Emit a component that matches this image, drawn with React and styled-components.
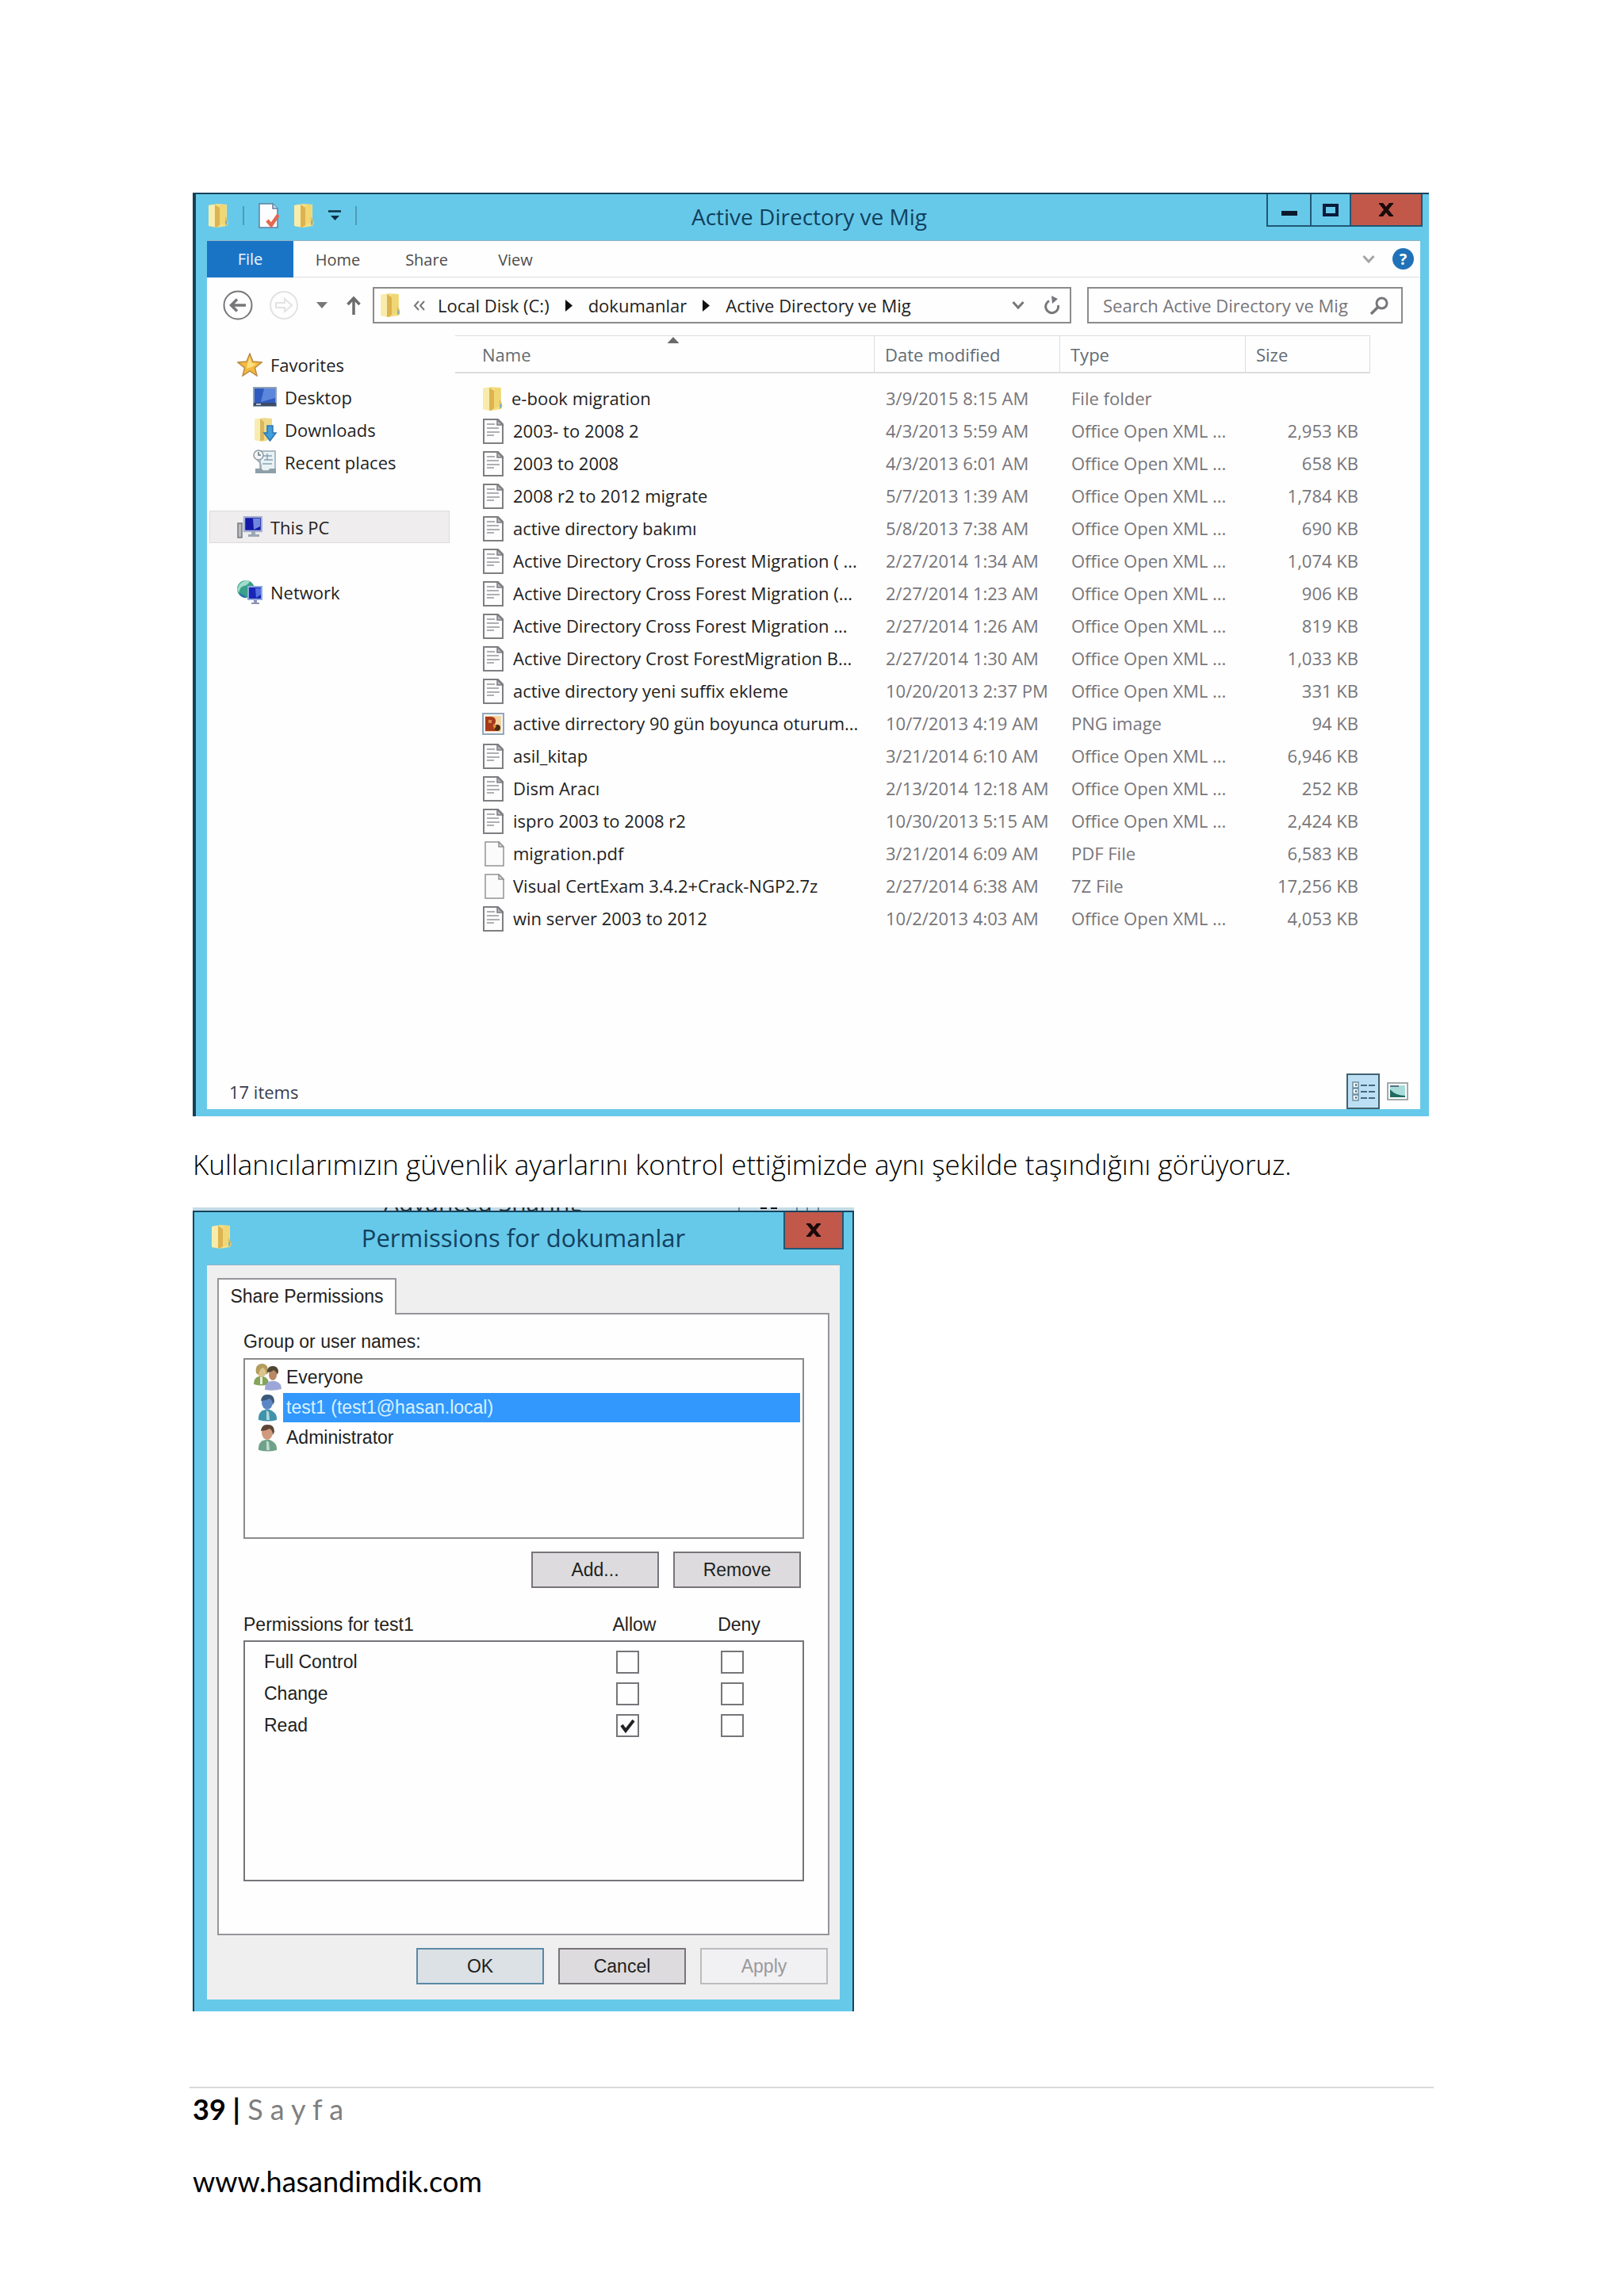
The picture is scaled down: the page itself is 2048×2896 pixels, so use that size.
import { Fragment } from 'react';
import styled, { createGlobalStyle } from 'styled-components';

const GlobalStyle = createGlobalStyle`
  *, *::before, *::after {
    box-sizing: border-box;
  }

  body {
    margin: 0;
    background: #fff;
    color: #1f1f1f;
    font-family: "Open Sans", "Noto Sans", sans-serif;
    font-size: 22px;
    line-height: 30px;
  }

  button, input {
    margin: 0;
    padding: 0;
    border: 0;
    background: none;
    color: inherit;
    font: inherit;
  }

  a {
    color: inherit;
    text-decoration: none;
  }

  svg {
    display: block;
    flex: none;
  }
`;

const Page = styled.main`
  padding: 243px 246px 100px 243px;
`;

/* window chrome */

const ExplorerWindow = styled.section`
  border-top: 2px solid #17435d;
  border-left: 4px solid #173f55;
  background: #67c9e9;
`;

const TitleBar = styled.header`
  display: grid;
  grid-template-columns: 1fr auto 1fr;
  height: ${({ $height }) => $height};
  padding: ${({ $padding }) => $padding};
`;

const TitleTools = styled.div`
  display: flex;
  align-items: center;
  gap: 18px;
  padding: 0 0 4px ${({ $indent }) => $indent};
`;

const TitleText = styled.h1`
  margin: 0;
  padding-top: 8px;
  color: #12415f;
  font-size: ${({ $size }) => $size};
  font-weight: 400;
  line-height: 40px;
`;

const Divider = styled.span`
  width: 2px;
  height: 24px;
  background: #4a9dbb;
`;

const WindowControls = styled.div`
  display: flex;
  justify-content: flex-end;
  align-items: flex-start;
`;

const ControlButton = styled.button`
  display: flex;
  justify-content: center;
  align-items: center;
  width: ${({ $width }) => $width};
  height: ${({ $height }) => $height || '41px'};
  border: 2px solid #1f5876;
  border-top: 0;
  background: ${({ $danger }) => ($danger ? '#c1584a' : 'transparent')};

  & + & {
    border-left: 0;
  }
`;

/* explorer */

const ExplorerBody = styled.div`
  margin: 0 11px 0 14px;
  border-top: 1px solid #8fb3c4;
  background: #fefefe;
`;

const Ribbon = styled.nav`
  display: flex;
  align-items: center;
  height: 46px;
  border-bottom: 1px solid #dedede;
  color: #4d4d4d;
  font-size: 20px;
`;

const FileTab = styled.button`
  width: 109px;
  height: 46px;
  background: #1a74c6;
  color: #e9f6ff;
`;

const RibbonTab = styled.button`
  width: 112px;
  height: 46px;
  padding-top: 3px;
`;

const RibbonEnd = styled.div`
  display: flex;
  align-items: center;
  gap: 22px;
  margin-left: auto;
  padding-right: 8px;
`;

const HelpButton = styled.button`
  width: 27px;
  height: 27px;
  border-radius: 50%;
  background: #2072b8;
  color: #fff;
  font-size: 20px;
  font-weight: 700;
  line-height: 27px;
`;

const AddressRow = styled.div`
  display: flex;
  align-items: center;
  gap: 13px;
  padding: 12px 22px 15px 20px;
`;

const NavButtons = styled.div`
  display: flex;
  align-items: center;
  gap: 20px;
`;

const NavButton = styled.button`
  display: flex;
  justify-content: center;
  width: ${({ $width }) => $width};
`;

const AddressBox = styled.div`
  display: flex;
  flex: 1;
  align-items: center;
  gap: 16px;
  height: 46px;
  padding: 0 11px 0 7px;
  border: 2px solid #8d8a8c;
`;

const Crumbs = styled.nav`
  display: flex;
  flex: 1;
  align-items: center;
  gap: 20px;
`;

const SearchBox = styled.label`
  display: flex;
  align-items: center;
  width: 398px;
  height: 46px;
  margin-left: 7px;
  padding: 0 16px 0 18px;
  border: 2px solid #8d8a8c;
`;

const SearchInput = styled.input`
  flex: 1;
  min-width: 0;
  outline: 0;

  &::placeholder {
    color: #77757a;
    opacity: 1;
  }
`;

const Panes = styled.div`
  display: grid;
  grid-template-columns: 313px minmax(0, 1fr);
  padding-right: 63px;
  padding-bottom: 175px;
`;

const Sidebar = styled.nav`
  display: flex;
  flex-direction: column;
  padding: 16px 7px 0 3px;
`;

const SideLink = styled.a`
  display: flex;
  align-items: center;
  gap: 10px;
  height: 41px;
  margin-top: ${({ $spaced }) => ($spaced ? '41px' : '0')};
  padding-left: ${({ $nested }) => ($nested ? '54px' : '34px')};
  border: 1px solid ${({ $active }) => ($active ? '#dcdadb' : 'transparent')};
  background: ${({ $active }) => ($active ? '#efedee' : 'transparent')};
`;

const FileTable = styled.table`
  display: block;
`;

const FileHead = styled.thead`
  display: block;
  margin-bottom: 11px;
  border: 1px solid #dddcde;
  border-width: 1px 1px 2px 0;
`;

const FileBody = styled.tbody`
  display: block;
`;

const FileRow = styled.tr`
  display: grid;
  grid-template-columns: minmax(0, 1fr) 234px 234px 157px;
`;

const HeadCell = styled.th`
  position: relative;
  height: 45px;
  padding: 2px 0 0 ${({ $first }) => ($first ? '33px' : '13px')};
  border-left: 1px solid ${({ $first }) => ($first ? 'transparent' : '#dddcde')};
  color: #636b74;
  font-weight: 400;
  line-height: 42px;
  text-align: left;
`;

const SortMark = styled.svg`
  position: absolute;
  top: 1px;
  left: 52%;
  transform: translateX(-50%);
`;

const Cell = styled.td`
  height: 41px;
  padding: 0 0 0 14px;
  color: #77757a;
  line-height: 41px;
  white-space: nowrap;
`;

const NameCell = styled(Cell)`
  display: flex;
  align-items: center;
  gap: 11px;
  padding-left: 34px;
  color: #1f1f1f;
`;

const SizeCell = styled(Cell)`
  padding-right: 15px;
  text-align: right;
`;

const StatusBar = styled.footer`
  display: flex;
  align-items: center;
  gap: 8px;
  height: 45px;
  padding: 0 15px 0 28px;
  color: #3a3c50;
`;

const StatusText = styled.span`
  flex: 1;
`;

const ViewButton = styled.button`
  display: flex;
  justify-content: center;
  align-items: center;
  width: ${({ $active }) => ($active ? '42px' : '28px')};
  height: 45px;
  border: ${({ $active }) => ($active ? '2px solid #41626f' : '0')};
  background: ${({ $active }) => ($active ? '#bcdff3' : 'transparent')};
`;

const WindowEdge = styled.div`
  height: ${({ $height }) => $height};
`;

const Paragraph = styled.p`
  margin: 0;
  padding: 37px 0 30px;
  color: #000;
  font-size: 35px;
  font-weight: 300;
  line-height: 48px;
`;

/* permissions dialog */

const DialogShot = styled.div`
  max-width: 834px;
`;

const BehindStrip = styled.div`
  display: flex;
  justify-content: space-between;
  align-items: flex-end;
  height: 4px;
  padding: 0 44px 0 241px;
  overflow: hidden;
  background: #c3dbe6;
  color: #1c2b33;
  font-size: 30px;
  line-height: 20px;
`;

const DialogWindow = styled.section`
  border: 2px solid #17435d;
  border-bottom: 0;
  background: #67c9e9;
  font-family: "Liberation Sans", Arial, sans-serif;
  font-size: 23px;
`;

const DialogTitleText = styled(TitleText)`
  padding-top: 12px;
  font-family: "Open Sans", "Noto Sans", sans-serif;
`;

const DialogBody = styled.div`
  margin: 0 16px;
  padding: 16px 13px 19px;
  border-top: 1px solid #8fb3c4;
  background: #f0eff0;
`;

const TabButton = styled.button`
  position: relative;
  display: block;
  width: 226px;
  height: 46px;
  margin-bottom: -2px;
  padding-bottom: 3px;
  border: 2px solid #97959a;
  border-bottom: 0;
  background: #fefefe;
`;

const TabPanel = styled.div`
  padding: 19px 30px 66px 31px;
  border: 2px solid #97959a;
  background: #fefefe;
`;

const GroupLabel = styled.h2`
  margin: 0 0 6px;
  font-size: 23px;
  font-weight: 400;
  line-height: 30px;
`;

const UserList = styled.ul`
  min-height: 228px;
  margin: 0;
  padding: 3px 3px 0 8px;
  border: 2px solid #8d8a8c;
  list-style: none;
`;

const UserItem = styled.li`
  display: grid;
  grid-template-columns: 40px 1fr;
  align-items: center;
  height: 38px;

  > svg {
    justify-self: center;
  }
`;

const UserName = styled.button`
  height: 37px;
  padding-left: 4px;
  background: ${({ $selected }) => ($selected ? '#3298fe' : 'transparent')};
  color: ${({ $selected }) => ($selected ? '#d9f2ff' : 'inherit')};
  text-align: left;
`;

const ButtonRow = styled.div`
  display: flex;
  justify-content: flex-end;
  gap: 18px;
  padding: ${({ $padding }) => $padding};
`;

const tones = {
  normal: { border: '#77757a', fill: '#dddbdd', text: '#1f1f1f' },
  primary: { border: '#5a89a5', fill: '#dbe1e5', text: '#1f1f1f' },
  disabled: { border: '#bdbbbe', fill: '#f1f0f2', text: '#9a999c' },
};

const PushButton = styled.button`
  width: 161px;
  height: 46px;
  border: 2px solid ${({ $tone }) => tones[$tone].border};
  background: ${({ $tone }) => tones[$tone].fill};
  color: ${({ $tone }) => tones[$tone].text};
`;

const PermissionTable = styled.table`
  display: block;
`;

const PermissionHead = styled.thead`
  display: block;
  margin-bottom: 5px;
`;

const PermissionBody = styled.tbody`
  display: block;
  min-height: 304px;
  padding-top: 5px;
  border: 2px solid #77757a;
`;

const PermissionRow = styled.tr`
  display: grid;
  grid-template-columns: minmax(0, 1fr) 132px 132px;
  padding-right: 16px;
`;

const PermissionCell = styled.td`
  display: flex;
  justify-content: center;
  align-items: center;
  height: 40px;
  padding: 0 14px 0 0;
`;

const PermissionName = styled.th`
  height: ${({ $head }) => ($head ? '30px' : '40px')};
  padding: 0 0 0 ${({ $inset }) => ($inset ? '24px' : '0')};
  font-weight: 400;
  line-height: ${({ $head }) => ($head ? '30px' : '40px')};
  text-align: ${({ $center }) => ($center ? 'center' : 'left')};
`;

const Checkbox = styled.input`
  appearance: none;
  width: 29px;
  height: 29px;
  border: 2px solid #77757a;
  background: #fefefe;

  &:checked {
    background: #fefefe url("data:image/svg+xml,%3Csvg xmlns='http://www.w3.org/2000/svg' viewBox='0 0 25 25'%3E%3Cpath d='M5 12l5 7L20 6' fill='none' stroke='%23222' stroke-width='4'/%3E%3C/svg%3E") center / contain no-repeat;
  }
`;

/* page footer */

const PageFooter = styled.footer`
  margin: 95px -6px 0 -4px;
  padding: 4px 4px 0;
  border-top: 2px solid #d9d9d9;
  color: #000;
  font-family: Lato, "Open Sans", sans-serif;
  font-size: 36px;
  line-height: 44px;
`;

const PageNumber = styled.p`
  margin: 0 0 47px;
`;

const PageWord = styled.span`
  color: #7f7f7f;
`;

/* icons */

const FolderIcon = () => (
  <svg width="26" height="32" viewBox="0 0 26 32" aria-hidden="true">
    <path d="M1 3l11-2 12 1v20l2 3-2 4-13 2-10-2z" fill="#f3df86" />
    <path d="M1 3l8-1v28l-8-1z" fill="#f8ecab" />
    <path d="M9 2l6 4v22l-4 3-2-1z" fill="#dcb350" />
    <path d="M15 3l8-1v23l-8 3z" fill="#f0d674" />
    <path d="M22 17l3 5v5l-3 2z" fill="#d3bd62" />
    <path d="M23 23v4" stroke="#7fb3c4" strokeWidth="2" />
  </svg>
);

const CheckedPageIcon = () => (
  <svg width="26" height="32" viewBox="0 0 26 32" aria-hidden="true">
    <path d="M1 1h17l6 6v24H1z" fill="#fdfdff" stroke="#5f7fa0" strokeWidth="1.5" />
    <path d="M18 1v6h6" fill="#cfdcec" stroke="#5f7fa0" strokeWidth="1.5" />
    <path d="M11 22l5 6 9-13" fill="none" stroke="#e2694f" strokeWidth="4.5" />
  </svg>
);

const CustomizeIcon = () => (
  <svg width="16" height="14" viewBox="0 0 16 14" aria-hidden="true">
    <path d="M0 1.5h16" stroke="#0d2f45" strokeWidth="2.5" />
    <path d="M3 7h11l-5.5 6z" fill="#0d2f45" />
  </svg>
);

const MinimizeIcon = () => (
  <svg width="20" height="14" viewBox="0 0 20 14" aria-hidden="true">
    <path d="M0 11h20" stroke="#0a1a2c" strokeWidth="6" />
  </svg>
);

const MaximizeIcon = () => (
  <svg width="20" height="16" viewBox="0 0 20 16" aria-hidden="true">
    <path d="M2 2h16v12H2z" fill="none" stroke="#0a1a3a" strokeWidth="4" />
  </svg>
);

const CloseIcon = () => (
  <svg width="20" height="17" viewBox="0 0 20 17" aria-hidden="true">
    <path d="M1 1h5M14 1h5M1 16h5M14 16h5" stroke="#1a0a0c" strokeWidth="2" />
    <path d="M4 1l12 15M16 1L4 16" stroke="#1a0a0c" strokeWidth="4.5" />
  </svg>
);

const BehindControls = () => (
  <svg width="102" height="4" viewBox="0 0 102 4" aria-hidden="true">
    <path d="M1 0v4M74 0v4M87 0v4M101 0v4" stroke="#4c6570" strokeWidth="1.500" />
    <path d="M28 1h8M41 1h8" stroke="#111" strokeWidth="2" />
  </svg>
);

const ChevronIcon = ({ color = '#8b8b8b', width = 3 }) => (
  <svg width="16" height="12" viewBox="0 0 16 12" aria-hidden="true">
    <path d="M1.5 2L8 9l6.5-7" fill="none" stroke={color} strokeWidth={width} />
  </svg>
);

const BackIcon = () => (
  <svg width="38" height="38" viewBox="0 0 38 38" aria-hidden="true">
    <circle cx="19" cy="19" r="17.5" fill="none" stroke="#78767a" strokeWidth="2" />
    <path d="M29 19H11M18 11.5L10.500 19l7.500 7.500" fill="none" stroke="#78767a" strokeWidth="3.500" />
  </svg>
);

const ForwardIcon = () => (
  <svg width="38" height="38" viewBox="0 0 38 38" aria-hidden="true">
    <circle cx="19" cy="19" r="17" fill="none" stroke="#e4e2e4" strokeWidth="2" />
    <path d="M9 16h11v-5l9 8-9 8v-5H9z" fill="none" stroke="#e4e2e4" strokeWidth="2" />
  </svg>
);

const RecentIcon = () => (
  <svg width="14" height="9" viewBox="0 0 14 9" aria-hidden="true">
    <path d="M0 0h14L7 8z" fill="#78767a" />
  </svg>
);

const UpIcon = () => (
  <svg width="18" height="24" viewBox="0 0 18 24" aria-hidden="true">
    <path d="M9 24V3M1.500 11L9 3l7.500 8" fill="none" stroke="#6d6b6e" strokeWidth="3.500" />
  </svg>
);

const CrumbArrow = () => (
  <svg width="9" height="15" viewBox="0 0 9 15" aria-hidden="true">
    <path d="M0 0l9 7.500L0 15z" fill="#111" />
  </svg>
);

const CollapsedIcon = () => (
  <svg width="15" height="13" viewBox="0 0 15 13" aria-hidden="true">
    <path d="M7 1L2 6.500 7 12M14 1L9 6.500l5 5.500" fill="none" stroke="#777" strokeWidth="2" />
  </svg>
);

const RefreshIcon = () => (
  <svg width="22" height="24" viewBox="0 0 22 24" aria-hidden="true">
    <path d="M7 6.500A8 8 0 1 0 18.500 12" fill="none" stroke="#78767a" strokeWidth="3" />
    <path d="M10 0l8 4-7 6z" fill="#78767a" />
  </svg>
);

const SearchIcon = () => (
  <svg width="23" height="23" viewBox="0 0 23 23" aria-hidden="true">
    <circle cx="14.500" cy="8.500" r="6.500" fill="none" stroke="#78767a" strokeWidth="3" />
    <path d="M10 13l-9 9" stroke="#78767a" strokeWidth="3.500" />
  </svg>
);

const StarIcon = () => (
  <svg width="32" height="30" viewBox="0 0 32 30" aria-hidden="true">
    <path d="M16 1l4 10 11 1-8.500 7L25 29l-9-6-9 6 2.500-10L1 12l11-1z" fill="#f6b93c" stroke="#b98a48" strokeWidth="1.500" />
    <path d="M16 5l2.500 8 6 1-6.500 4-6 2 1-6z" fill="#fde07f" />
  </svg>
);

const DesktopIcon = () => (
  <svg width="30" height="25" viewBox="0 0 30 25" aria-hidden="true">
    <path d="M1 1h28v23H1z" fill="#2f5bc0" stroke="#8fa0b4" strokeWidth="2" />
    <path d="M14 2h14v12L10 19z" fill="#6f9ae6" opacity=".7" />
    <path d="M1 22h28" stroke="#3c4c66" strokeWidth="4" />
    <path d="M4 22h6" stroke="#b6c6d8" strokeWidth="2" />
  </svg>
);

const DownloadsIcon = () => (
  <svg width="30" height="32" viewBox="0 0 30 32" aria-hidden="true">
    <path d="M2 3l12-2 10 1v26l-12 3-10-2z" fill="#efd98a" />
    <path d="M2 3l7-1v28l-7-1z" fill="#f8ecb2" />
    <path d="M9 2l5 4v23l-5 1z" fill="#d9b75c" />
    <path d="M18 11h7v9h4l-7.500 10L14 20h4z" fill="#3f9fdb" stroke="#2b77b4" strokeWidth="1.500" />
  </svg>
);

const RecentPlacesIcon = () => (
  <svg width="30" height="31" viewBox="0 0 30 31" aria-hidden="true">
    <path d="M9 2h19v25H9z" fill="#eaf1f5" stroke="#93a5b0" strokeWidth="1.500" />
    <path d="M12 8h12M18 5v9M14 13h11M12 18h12" stroke="#86a3b5" strokeWidth="1.500" />
    <path d="M5 13q5 3 5 8v6h14" fill="none" stroke="#9fb0b9" strokeWidth="2" />
    <path d="M3 24h8l2 3h6l2-3h8v6H3z" fill="#8f9fa8" />
    <circle cx="7" cy="7" r="6" fill="#f3f6f8" stroke="#8f9ba3" strokeWidth="1.500" />
    <path d="M7 3v4h3" fill="none" stroke="#67757e" strokeWidth="1.500" />
  </svg>
);

const ComputerIcon = () => (
  <svg width="32" height="28" viewBox="0 0 32 28" aria-hidden="true">
    <path d="M1 9h5v18H1z" fill="#b9bcc0" stroke="#75797e" strokeWidth="1.500" />
    <path d="M9 1h22v18H9z" fill="#1418a8" stroke="#a3b3cf" strokeWidth="2.500" />
    <path d="M20 3h9v10l-8 4z" fill="#7187dd" />
    <path d="M18 19h5v4h5v3H14v-3h4z" fill="#9aa6b4" />
  </svg>
);

const NetworkIcon = () => (
  <svg width="32" height="32" viewBox="0 0 32 32" aria-hidden="true">
    <circle cx="11" cy="12" r="11" fill="#3aa089" />
    <path d="M3 6q7-7 13-4-2 5-7 6t-6 6-3-2z" fill="#9fdccb" />
    <path d="M2 17q6 1 10 6-6 1-10-6z" fill="#2f6fb0" />
    <path d="M14 9h17v16H14z" fill="#1726b8" stroke="#91a9dd" strokeWidth="2" />
    <path d="M23 11h7v8l-6 4z" fill="#5470e0" />
    <path d="M21 26h4v3h3v2H18v-2h3z" fill="#8d93b5" />
  </svg>
);

const DocumentIcon = () => (
  <svg width="28" height="32" viewBox="0 0 28 32" aria-hidden="true">
    <path d="M2 1h18l6 6v24H2z" fill="#fdfdfd" stroke="#807e82" strokeWidth="2" />
    <path d="M19 1v7h7z" fill="#b9b7ba" stroke="#807e82" strokeWidth="1.500" />
    <path d="M6 7h10M6 12h15M6 17h16M6 21h9" stroke="#97959a" strokeWidth="1.500" />
  </svg>
);

const BlankIcon = () => (
  <svg width="28" height="32" viewBox="0 0 28 32" aria-hidden="true">
    <path d="M4 1h17l6 6v24H4z" fill="#fbfbfb" stroke="#949296" strokeWidth="1.500" />
    <path d="M21 1v6h6z" fill="#dedcde" stroke="#949296" strokeWidth="1.500" />
  </svg>
);

const PictureIcon = () => (
  <svg width="28" height="28" viewBox="0 0 28 28" aria-hidden="true">
    <path d="M1 1h26v26H1z" fill="#f4f6f8" stroke="#94a8b8" strokeWidth="2" />
    <path d="M4 4h20v20H4z" fill="#f3d3a0" />
    <path d="M4 5h8q6 1 5 7-1 3-3 4l3 7H4z" fill="#a8391b" />
    <path d="M8 9h4v4H8z" fill="#d98a4a" />
    <circle cx="19" cy="19" r="4" fill="#4b2a12" />
    <path d="M14 14l4 3-3 4z" fill="#e0902c" />
  </svg>
);

const DetailsIcon = () => (
  <svg width="30" height="26" viewBox="0 0 30 26" aria-hidden="true">
    <path d="M2 1h7v7H2zM2 9h7v7H2zM2 17h7v7H2z" fill="#f5fafc" stroke="#6d8fa2" strokeWidth="1.500" />
    <path d="M5 4.500h2M5 12.500h2M5 20.500h2" stroke="#2c4a5c" strokeWidth="2" />
    <path d="M12 5h8M22 5h8M12 13h8M22 13h8M12 21h8M22 21h8" stroke="#43697f" strokeWidth="2" />
  </svg>
);

const ThumbnailsIcon = () => (
  <svg width="27" height="23" viewBox="0 0 27 23" aria-hidden="true">
    <path d="M1 1h25v21H1z" fill="#fff" stroke="#a3a9ac" strokeWidth="2" />
    <path d="M4 4h19v15H4z" fill="#a8dcd9" />
    <path d="M4 4h11v2H4z" fill="#4f7484" />
    <path d="M4 9q7 8 19 8v2H4z" fill="#1f6b62" />
  </svg>
);

const PersonIcon = ({ skin, shirt, hair }) => (
  <svg width="30" height="35" viewBox="0 0 30 35" aria-hidden="true">
    <path d="M4 33q-1-11 9-13h5q10 4 9 13-11 3-23 0z" fill={shirt} />
    <ellipse cx="15" cy="11" rx="7" ry="9" fill={skin} />
    <path d="M7 9Q8 0 16 1q8 0 8 9l-2 4q0-6-4-8-5 3-11 3z" fill={hair} />
    <path d="M14 21l3 2 1 10h-4z" fill="#e5f3ee" opacity=".7" />
  </svg>
);

const PeopleIcon = () => (
  <svg width="36" height="34" viewBox="0 0 36 34" aria-hidden="true">
    <path d="M1 26q0-9 7-10h5q7 2 7 10-9 3-19 0z" fill="#84a45a" />
    <ellipse cx="11" cy="9" rx="6" ry="8" fill="#dcc48f" />
    <path d="M4 12Q2 1 11 0q9 0 8 12l-3 2q1-6-3-9-5 1-6 9z" fill="#b49c5c" />
    <path d="M15 33q0-10 8-11h5q8 2 8 10-10 3-21 1z" fill="#9ca6d8" />
    <ellipse cx="25" cy="14" rx="5" ry="7" fill="#b98763" />
    <path d="M18 11q0-8 7-8t7 8l-2 3q0-4-4-6-3 3-8 3z" fill="#4d4632" />
    <path d="M9 17h3v9H9z" fill="#eaf2dc" />
  </svg>
);

/* data */

const places = [
  { label: 'Favorites', Icon: StarIcon },
  { label: 'Desktop', Icon: DesktopIcon, nested: true },
  { label: 'Downloads', Icon: DownloadsIcon, nested: true },
  { label: 'Recent places', Icon: RecentPlacesIcon, nested: true },
  { label: 'This PC', Icon: ComputerIcon, spaced: true, active: true },
  { label: 'Network', Icon: NetworkIcon, spaced: true },
];

const xml = 'Office Open XML ...';

const files = [
  [FolderIcon, 'e-book migration', '3/9/2015 8:15 AM', 'File folder', ''],
  [DocumentIcon, '2003- to 2008 2', '4/3/2013 5:59 AM', xml, '2,953 KB'],
  [DocumentIcon, '2003 to 2008', '4/3/2013 6:01 AM', xml, '658 KB'],
  [DocumentIcon, '2008 r2 to 2012 migrate', '5/7/2013 1:39 AM', xml, '1,784 KB'],
  [DocumentIcon, 'active directory bakımı', '5/8/2013 7:38 AM', xml, '690 KB'],
  [DocumentIcon, 'Active Directory Cross Forest Migration ( ...', '2/27/2014 1:34 AM', xml, '1,074 KB'],
  [DocumentIcon, 'Active Directory Cross Forest Migration (...', '2/27/2014 1:23 AM', xml, '906 KB'],
  [DocumentIcon, 'Active Directory Cross Forest Migration ...', '2/27/2014 1:26 AM', xml, '819 KB'],
  [DocumentIcon, 'Active Directory Crost ForestMigration B...', '2/27/2014 1:30 AM', xml, '1,033 KB'],
  [DocumentIcon, 'active directory yeni suffix ekleme', '10/20/2013 2:37 PM', xml, '331 KB'],
  [PictureIcon, 'active dirrectory 90 gün boyunca oturum...', '10/7/2013 4:19 AM', 'PNG image', '94 KB'],
  [DocumentIcon, 'asil_kitap', '3/21/2014 6:10 AM', xml, '6,946 KB'],
  [DocumentIcon, 'Dism Aracı', '2/13/2014 12:18 AM', xml, '252 KB'],
  [DocumentIcon, 'ispro 2003 to 2008 r2', '10/30/2013 5:15 AM', xml, '2,424 KB'],
  [BlankIcon, 'migration.pdf', '3/21/2014 6:09 AM', 'PDF File', '6,583 KB'],
  [BlankIcon, 'Visual CertExam 3.4.2+Crack-NGP2.7z', '2/27/2014 6:38 AM', '7Z File', '17,256 KB'],
  [DocumentIcon, 'win server 2003 to 2012', '10/2/2013 4:03 AM', xml, '4,053 KB'],
];

const crumbs = ['Local Disk (C:)', 'dokumanlar', 'Active Directory ve Mig'];

const users = [
  { name: 'Everyone', icon: <PeopleIcon /> },
  {
    name: 'test1 (test1@hasan.local)',
    icon: <PersonIcon skin="#5b86c4" shirt="#3f93ab" hair="#3c5878" />,
    selected: true,
  },
  { name: 'Administrator', icon: <PersonIcon skin="#d09a7c" shirt="#6fa28a" hair="#5d4636" /> },
];

const permissions = [
  { name: 'Full Control', allow: false, deny: false },
  { name: 'Change', allow: false, deny: false },
  { name: 'Read', allow: true, deny: false },
];

const Explorer = () => (
  <ExplorerWindow>
    <TitleBar $height="58px" $padding="0 8px 0 0">
      <TitleTools $indent="15px">
        <FolderIcon />
        <Divider />
        <CheckedPageIcon />
        <FolderIcon />
        <CustomizeIcon />
        <Divider />
      </TitleTools>
      <TitleText $size="28px">Active Directory ve Mig</TitleText>
      <WindowControls>
        <ControlButton $width="57px" aria-label="Minimize"><MinimizeIcon /></ControlButton>
        <ControlButton $width="50px" aria-label="Maximize"><MaximizeIcon /></ControlButton>
        <ControlButton $width="90px" $danger aria-label="Close"><CloseIcon /></ControlButton>
      </WindowControls>
    </TitleBar>
    <ExplorerBody>
      <Ribbon>
        <FileTab>File</FileTab>
        <RibbonTab>Home</RibbonTab>
        <RibbonTab>Share</RibbonTab>
        <RibbonTab>View</RibbonTab>
        <RibbonEnd>
          <button aria-label="Expand ribbon"><ChevronIcon color="#a5a5a5" /></button>
          <HelpButton>?</HelpButton>
        </RibbonEnd>
      </Ribbon>
      <AddressRow>
        <NavButtons>
          <NavButton $width="38px" aria-label="Back"><BackIcon /></NavButton>
          <NavButton $width="38px" aria-label="Forward"><ForwardIcon /></NavButton>
          <NavButton $width="18px" aria-label="Recent locations"><RecentIcon /></NavButton>
          <NavButton $width="22px" aria-label="Up"><UpIcon /></NavButton>
        </NavButtons>
        <AddressBox>
          <FolderIcon />
          <CollapsedIcon />
          <Crumbs>
            {crumbs.map((crumb, index) => (
              <Fragment key={crumb}>
                {index > 0 && <CrumbArrow />}
                <a href="#files">{crumb}</a>
              </Fragment>
            ))}
          </Crumbs>
          <NavButton $width="32px" aria-label="Previous locations"><ChevronIcon color="#78767a" /></NavButton>
          <NavButton $width="22px" aria-label="Refresh"><RefreshIcon /></NavButton>
        </AddressBox>
        <SearchBox>
          <SearchInput type="text" aria-label="Search" placeholder="Search Active Directory ve Mig" />
          <SearchIcon />
        </SearchBox>
      </AddressRow>
      <Panes>
        <Sidebar>
          {places.map(({ label, Icon, nested, spaced, active }) => (
            <SideLink key={label} href="#files" $nested={nested} $spaced={spaced} $active={active}>
              <Icon />
              {label}
            </SideLink>
          ))}
        </Sidebar>
        <FileTable id="files">
          <FileHead>
            <FileRow>
              <HeadCell $first>
                Name
                <SortMark width="15" height="8" viewBox="0 0 15 8"><path d="M0 8l7.500-8L15 8z" fill="#6b696c" /></SortMark>
              </HeadCell>
              <HeadCell>Date modified</HeadCell>
              <HeadCell>Type</HeadCell>
              <HeadCell>Size</HeadCell>
            </FileRow>
          </FileHead>
          <FileBody>
            {files.map(([Icon, name, date, type, size]) => (
              <FileRow key={name}>
                <NameCell><Icon />{name}</NameCell>
                <Cell>{date}</Cell>
                <Cell>{type}</Cell>
                <SizeCell>{size}</SizeCell>
              </FileRow>
            ))}
          </FileBody>
        </FileTable>
      </Panes>
      <StatusBar>
        <StatusText>17 items</StatusText>
        <ViewButton $active aria-label="Details view"><DetailsIcon /></ViewButton>
        <ViewButton aria-label="Thumbnail view"><ThumbnailsIcon /></ViewButton>
      </StatusBar>
    </ExplorerBody>
    <WindowEdge $height="9px" />
  </ExplorerWindow>
);

const PermissionsDialog = () => (
  <DialogShot>
    <BehindStrip>
      Advanced Sharing
      <BehindControls />
    </BehindStrip>
    <DialogWindow>
      <TitleBar $height="66px" $padding="0 11px">
        <TitleTools $indent="10px">
          <FolderIcon />
        </TitleTools>
        <DialogTitleText $size="31px">Permissions for dokumanlar</DialogTitleText>
        <WindowControls>
          <ControlButton $width="76px" $height="47px" $danger aria-label="Close"><CloseIcon /></ControlButton>
        </WindowControls>
      </TitleBar>
      <DialogBody>
        <TabButton>Share Permissions</TabButton>
        <TabPanel>
          <GroupLabel>Group or user names:</GroupLabel>
          <UserList>
            {users.map(({ name, icon, selected }) => (
              <UserItem key={name}>
                {icon}
                <UserName $selected={selected}>{name}</UserName>
              </UserItem>
            ))}
          </UserList>
          <ButtonRow $padding="16px 4px 31px 0">
            <PushButton $tone="normal">Add...</PushButton>
            <PushButton $tone="normal">Remove</PushButton>
          </ButtonRow>
          <PermissionTable>
            <PermissionHead>
              <PermissionRow>
                <PermissionName $head>Permissions for test1</PermissionName>
                <PermissionName $head $center>Allow</PermissionName>
                <PermissionName $head $center>Deny</PermissionName>
              </PermissionRow>
            </PermissionHead>
            <PermissionBody>
              {permissions.map(({ name, allow, deny }) => (
                <PermissionRow key={name}>
                  <PermissionName $inset>{name}</PermissionName>
                  <PermissionCell>
                    <Checkbox type="checkbox" defaultChecked={allow} aria-label={`Allow ${name}`} />
                  </PermissionCell>
                  <PermissionCell>
                    <Checkbox type="checkbox" defaultChecked={deny} aria-label={`Deny ${name}`} />
                  </PermissionCell>
                </PermissionRow>
              ))}
            </PermissionBody>
          </PermissionTable>
        </TabPanel>
        <ButtonRow $padding="16px 2px 0 0">
          <PushButton $tone="primary">OK</PushButton>
          <PushButton $tone="normal">Cancel</PushButton>
          <PushButton $tone="disabled" disabled>Apply</PushButton>
        </ButtonRow>
      </DialogBody>
      <WindowEdge $height="15px" />
    </DialogWindow>
  </DialogShot>
);

const App = () => (
  <>
    <GlobalStyle />
    <Page>
      <Explorer />
      <Paragraph>Kullanıcılarımızın güvenlik ayarlarını kontrol ettiğimizde aynı şekilde taşındığını görüyoruz.</Paragraph>
      <PermissionsDialog />
      <PageFooter>
        <PageNumber><b>39 |</b> <PageWord>S a y f a</PageWord></PageNumber>
        <a href="#top">www.hasandimdik.com</a>
      </PageFooter>
    </Page>
  </>
);

export default App;
